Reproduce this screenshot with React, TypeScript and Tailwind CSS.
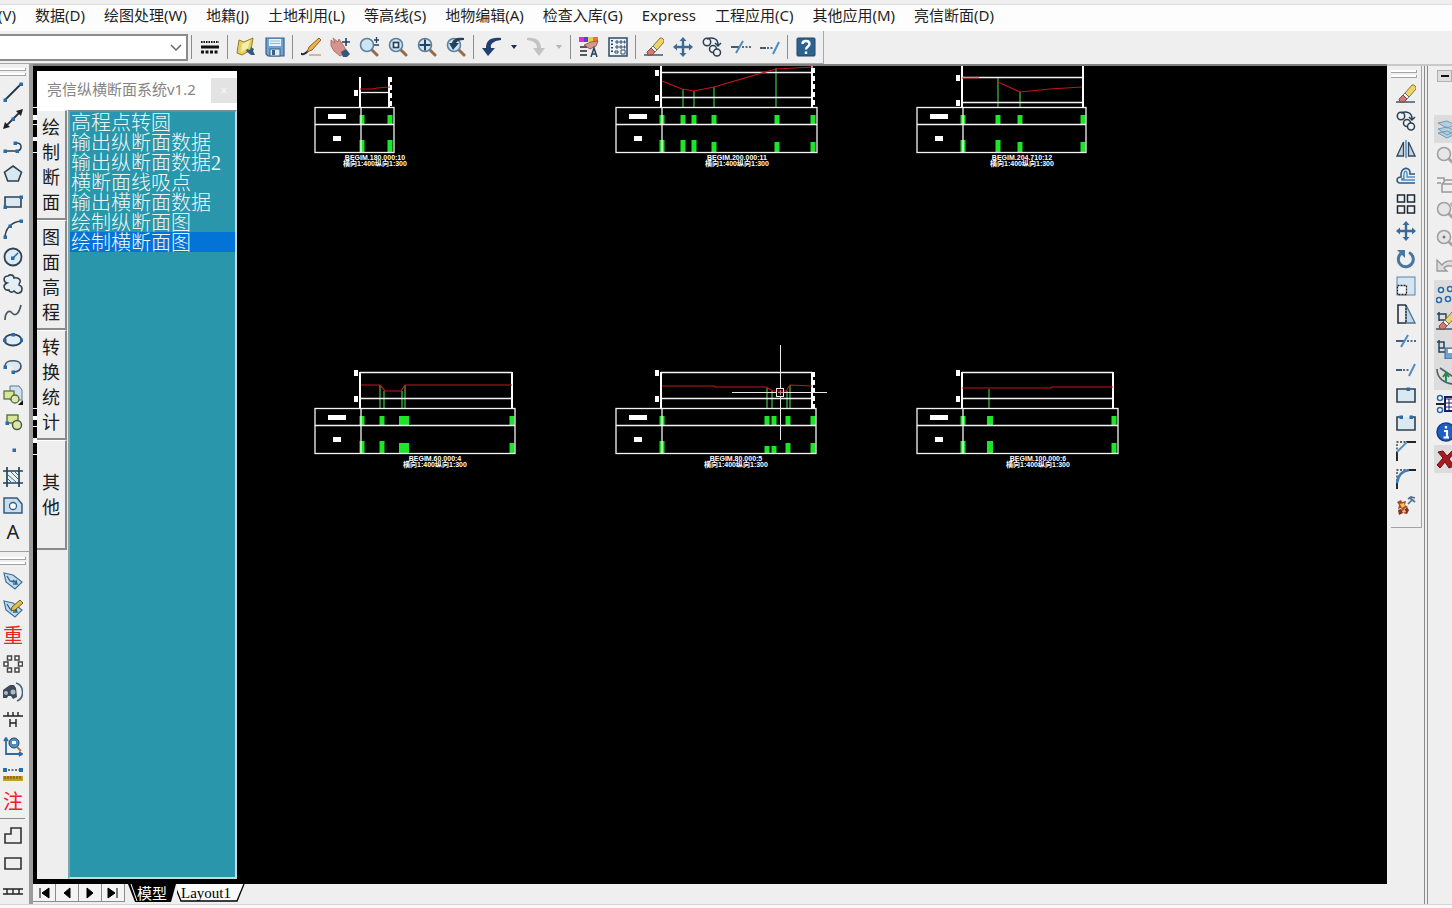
import { useState, type ReactNode } from "react";
import { clsx } from "clsx";

type IconDef = { label: string; art?: ReactNode; char?: string; charClass?: string };

const NAVY = "#24425c";
const BLUE = "#2b6ca6";

const Dot = ({ x, y }: { x: number; y: number }) => (
  <rect x={x - 1.5} y={y - 1.5} width="3.500" height="3.500" fill={BLUE} />
);

const Lens = ({ children, muted }: { children?: ReactNode; muted?: boolean }) => (
  <>
    <path d="M13 13l5 5" stroke={muted ? "#a5a5a5" : "#9a6a45"} strokeWidth="3" strokeLinecap="round" />
    <circle cx="8" cy="8" r="6.500" fill={muted ? "#e6e6e6" : "#cfe4f2"} stroke={muted ? "#a0a0a0" : "#5d7f9e"} strokeWidth="1.600" />
    {children}
  </>
);

const Eraser = () => (
  <>
    <path d="M0 18h19" stroke={NAVY} strokeWidth="1.300" />
    <path d="M9 9l7-8h2l2 2v2l-7 8z" fill="#ecd566" stroke="#7d6a2c" strokeWidth=".9" />
    <path d="M9 9l4 4-2 2-4-4z" fill="#eef2f6" stroke="#4f5f70" strokeWidth=".8" />
    <path d="M7 11l4 4-3 3H4l-1-3z" fill="#d07c70" stroke="#7d3f37" strokeWidth=".9" />
  </>
);

const MoveArrows = () => (
  <path d="M10 0l3.500 4H11.200v4.800H16V6.500l4 3.500-4 3.500v-2.300h-4.800V16h2.300L10 20l-3.500-4h2.300v-4.800H4v2.300L0 10l4-3.500v2.300h4.800V4H6.500z" fill="#3c6b98" />
);

const CopyRings = () => (
  <g fill="#eef2f5" stroke="#2d3d4a" strokeWidth="1.500">
    <circle cx="5" cy="5" r="3.700" />
    <path d="M5 2c5-2 11-1 11 6M13 6l3 3 3-3" fill="none" stroke={NAVY} />
    <circle cx="11" cy="12" r="3.500" />
    <circle cx="15" cy="15.500" r="3.500" />
  </g>
);

const Trim = () => (
  <>
    <path d="M0 10h8" stroke={NAVY} strokeWidth="1.700" />
    <path d="M11 10h9" stroke={NAVY} strokeWidth="1.700" strokeDasharray="2 1.500" />
    <path d="M5 16l7-12" stroke="#4d8cc2" strokeWidth="2" />
  </>
);

const Extend = () => (
  <>
    <path d="M0 11h6" stroke={NAVY} strokeWidth="1.700" />
    <path d="M7 11h7" stroke={NAVY} strokeWidth="1.700" strokeDasharray="2 1.500" />
    <path d="M13 17l6-12" stroke="#4d8cc2" strokeWidth="2" />
  </>
);

const Tag = () => (
  <>
    <path d="M1 2l9 2 9 7-7 7-9-7z" fill="#c3dcec" stroke="#3e6f96" strokeWidth="1.200" />
    <path d="M4 5l3 5 4 1M10 9l4 4M13 9l1 4-4 0" fill="none" stroke="#27628f" strokeWidth="1.300" />
  </>
);

const fileTools: IconDef[] = [
  {
    label: "打开图层",
    art: (
      <>
        <path d="M3 3l5 2 9-4-2 12-9 5-5-2z" fill="#e5d160" stroke="#927b27" />
        <path d="M6 7l8-4-2 8-7 4z" fill="#f5eda8" />
        <path d="M19 18h-4l-5-4 1-2 3 1 1-3 3 2-1 2z" fill="#31597e" />
      </>
    ),
  },
  {
    label: "保存",
    art: (
      <>
        <path d="M1 1h18v18H3l-2-2z" fill="#6fa4d2" stroke="#35618d" strokeWidth="1.200" />
        <rect x="4" y="2" width="12" height="7" fill="#e9f2f9" />
        <path d="M5 4h10M5 6.500h10" stroke="#9cb6cc" />
        <rect x="5" y="12" width="10" height="7" fill="#e1e8ee" stroke="#35618d" />
        <rect x="7" y="13" width="3" height="5" fill="#35618d" />
      </>
    ),
  },
];

const viewTools: IconDef[] = [
  {
    label: "画笔",
    art: (
      <>
        <path d="M0 16c1 3 5 0 7-2" stroke="#222" strokeWidth="2" fill="none" />
        <path d="M8 18h12" stroke="#d79a85" strokeWidth="1.500" />
        <path d="M6 15l2-5L18 1l2 2-9 10z" fill="#e7b54c" stroke="#8c5e25" />
      </>
    ),
  },
  {
    label: "平移",
    art: (
      <>
        <path d="M1 3l4 3-2-5 5 4 1-3 6 9 1 5-6 3-6-5-3-5z" fill="#d5948d" stroke="#a8625c" strokeWidth=".8" />
        <path d="M16 1v8M12 5h8" stroke={NAVY} strokeWidth="1.600" />
        <path d="M11 15l5-3 4 5-3 3h-4z" fill="#34577d" />
      </>
    ),
  },
  { label: "实时缩放", art: <Lens><path d="M15 3h5M17.500 0v6M15 8h5" stroke={NAVY} strokeWidth="1.300" /></Lens> },
  { label: "窗口缩放", art: <Lens><rect x="5.500" y="5.500" width="5" height="5" fill="#fff" stroke={NAVY} strokeWidth="1.700" /></Lens> },
  { label: "范围缩放", art: <Lens><path d="M8 2.500v11M2.500 8h11" stroke={NAVY} strokeWidth="2" /></Lens> },
  { label: "上一视图", art: <Lens><path d="M18 1C11 0 7 2 6 6H3l4 7 6-7h-3c1-2 4-3 8-3z" fill={NAVY} /></Lens> },
];

const stylesTools: IconDef[] = [
  {
    label: "特性匹配",
    art: (
      <>
        <path d="M0 0h5v5H0z" fill="#d830c8" />
        <path d="M5 0h4v5H5z" fill="#4747e0" />
        <path d="M9 0h5v5H9z" fill="#e3ce3c" />
        <path d="M14 0h5v5h-5z" fill="#e5753c" />
        <path d="M5 8l7-3 7-1-2 5-6 3z" fill="#d69b8c" stroke="#935c50" />
        <path d="M1 10h7M1 14h7M1 18h7" stroke="#585858" strokeWidth="1.800" />
        <path d="M12 20l3-9 3 9M13 17h4" fill="none" stroke={NAVY} strokeWidth="1.500" />
      </>
    ),
  },
  {
    label: "计算器",
    art: (
      <>
        <rect x="1" y="1" width="18" height="18" fill="#eef3f8" stroke="#2d4a67" strokeWidth="1.500" />
        <path d="M4 3v14" stroke={NAVY} strokeWidth="2" strokeDasharray="1.500 2" />
        <g fill="#fff" stroke="#2d4a67">
          <path d="M8 4h2v2H8zM12 4h2v2h-2zM16 4h1v2h-1zM8 9h2v2H8zM12 9h2v2h-2zM16 9h1v2h-1zM7 14h3v2H7zM13 13h4v4h-4z" />
        </g>
      </>
    ),
  },
];

const editTools: IconDef[] = [
  { label: "删除", art: <Eraser /> },
  { label: "移动", art: <MoveArrows /> },
  { label: "复制", art: <CopyRings /> },
  { label: "修剪", art: <Trim /> },
  { label: "延伸", art: <Extend /> },
];

const drawTools: IconDef[] = [
  { label: "直线", art: <><path d="M2 18L18 2" stroke="#263440" strokeWidth="1.800" /><Dot x={2} y={18} /><Dot x={18} y={2} /></> },
  {
    label: "构造线",
    art: (
      <>
        <path d="M2 18L18 2" stroke="#263440" strokeWidth="1.800" />
        <path d="M0 20l2-7 5 5zM20 0l-7 2 5 5z" fill="#222" />
        <Dot x={10} y={10} />
      </>
    ),
  },
  { label: "多段线", art: <><path d="M2 14h12c6-1 5-9-1-8" fill="none" stroke={NAVY} strokeWidth="1.500" /><Dot x={2} y={14} /><Dot x={14} y={14} /><Dot x={12} y={6} /></> },
  { label: "正多边形", art: <path d="M10 2l8.500 6.200L15.300 17H4.700L1.500 8.200z" fill="#d7e8f3" stroke="#2f4250" strokeWidth="1.600" /> },
  { label: "矩形", art: <><path d="M2 5h16v10H2z" fill="#dbe9f3" stroke="#2f4250" strokeWidth="1.600" /><Dot x={18} y={5} /><Dot x={2} y={15} /></> },
  { label: "圆弧", art: <><path d="M2 19C2 10 8 3 18 2" fill="none" stroke="#2f4250" strokeWidth="1.500" /><Dot x={2} y={18} /><Dot x={7} y={7} /><Dot x={18} y={2} /></> },
  { label: "圆", art: <><circle cx="10" cy="10" r="8.500" fill="#dcebf5" stroke="#2f4250" strokeWidth="1.800" /><path d="M10 11l5-5" stroke={BLUE} strokeWidth="1.500" /><Dot x={9.5} y={11} /></> },
  { label: "修订云线", art: <path d="M4 9C0 8 0 2 5 2c2-2 6-1 6 2 3-1 7 1 6 4-1 2-1 2-1 3 4 1 4 7 0 8-3 1-4-1-5-2-2 2-5 1-5-1-5 1-7-5-2-7z" fill="#e3eef5" stroke="#34444f" strokeWidth="1.600" /> },
  { label: "样条曲线", art: <path d="M2 18c0-7 4-11 7-7 4 4 7 0 9-8" fill="none" stroke="#4b5660" strokeWidth="1.700" /> },
  { label: "椭圆", art: <><ellipse cx="10" cy="10" rx="8.500" ry="5.500" fill="#e1eef6" stroke="#2f4250" strokeWidth="1.800" /><Dot x={1.5} y={10} /><Dot x={18.5} y={10} /><Dot x={10} y={4.5} /></> },
  { label: "椭圆弧", art: <><path d="M2 9C2 2 18 2 18 9c0 4-3 6-8 6V9z" fill="#dce9f2" /><path d="M2 9C2 2 18 2 18 9c0 4-3 6-8 6" fill="none" stroke="#44586a" strokeWidth="1.700" /><Dot x={2} y={10} /><Dot x={10} y={15} /></> },
  {
    label: "插入块",
    art: (
      <>
        <path d="M7 1h9l3 4v10H7z" fill="#cfe1ee" stroke="#587b97" />
        <rect x="1" y="6" width="10" height="8" fill="#d9e69a" stroke="#4c6a3a" strokeWidth="1.200" />
        <circle cx="12" cy="14" r="4" fill="#dbe6b3" stroke="#57693b" strokeWidth="1.300" />
        <path d="M20 15v5h-5z" fill="#111" />
      </>
    ),
  },
  {
    label: "创建块",
    art: (
      <>
        <rect x="4" y="3" width="11" height="8" fill="#d9e69a" stroke="#4c6a3a" strokeWidth="1.300" />
        <circle cx="14" cy="13" r="4.500" fill="#dbe6b3" stroke="#4c5d36" strokeWidth="1.500" />
        <Dot x={4} y={11} />
      </>
    ),
  },
  { label: "点", art: <Dot x={11} y={10} /> },
  { label: "图案填充", art: <><path d="M4 0v20M16 0v20M0 4h20M0 16h20" stroke={NAVY} strokeWidth="1.700" /><path d="M5 8l8 7M5 12l3 3M8 5l8 8M12 5l4 4" stroke={BLUE} /></> },
  { label: "面域", art: <><path d="M1 3h13l5 6v9H1z" fill="#c8def0" stroke="#355b7c" strokeWidth="1.500" /><circle cx="10" cy="11" r="3.500" fill="#fff" stroke="#355b7c" strokeWidth="1.300" /></> },
  { label: "多行文字", char: "A", charClass: "text-[#222222]" },
];

const annoTools: IconDef[] = [
  { label: "标签", art: <Tag /> },
  { label: "编辑标签", art: <><Tag /><path d="M8 12l1-4 8-7 3 3-8 7z" fill="#e2bd4e" stroke="#6d5524" /></> },
  { label: "重生成", char: "重", charClass: "text-[#e8231e]" },
  { label: "节点", art: <path d="M4.500 2h4v4h-4zM12 2h4v4h-4zM1 8h4v4H1zM15.500 8h4v4h-4zM4.500 14h4v4h-4zM12 14h4v4h-4z" fill="#fff" stroke="#444" strokeWidth="1.500" /> },
  {
    label: "查找",
    art: (
      <>
        <path d="M0 8l4-3 3-2h4l2 3 1 9-4 2-2-3H5l-1 2H0z" fill="#3e4a57" />
        <circle cx="3" cy="11" r="2" fill="#a9bccb" />
        <circle cx="10" cy="10" r="2.500" fill="#a9bccb" />
        <path d="M13 1c8 2 9 15 1 18" stroke="#4a6680" strokeWidth="1.700" fill="none" />
      </>
    ),
  },
  { label: "间距", art: <path d="M0 7h20M5 3v4M10 3v4M15 3v4M7 10v8M13 10v8M7 14h6" stroke="#222" strokeWidth="1.400" fill="none" /> },
  {
    label: "坐标查询",
    art: (
      <>
        <path d="M3 2v15h15M1 4l2-3 2 3M16 15l3 2-3 2" fill="none" stroke={BLUE} strokeWidth="1.800" />
        <circle cx="11" cy="6" r="5" fill="#4f8cc2" stroke={NAVY} />
        <rect x="9" y="4" width="4" height="3" fill="#fff" />
        <path d="M14 10l4 4" stroke="#a8764c" strokeWidth="2" />
      </>
    ),
  },
  {
    label: "量距",
    art: (
      <>
        <path d="M5 5h11" stroke="#445" strokeWidth="1.500" strokeDasharray="2 1.500" />
        <rect x="0" y="3" width="4" height="4" fill={BLUE} />
        <rect x="16" y="3" width="4" height="4" fill={BLUE} />
        <rect x="0" y="11" width="20" height="5" fill="#c69d27" />
        <path d="M2 11v3M5 11v3M8 11v3M11 11v3M14 11v3M17 11v3" stroke="#5e470b" />
      </>
    ),
  },
  { label: "注记", char: "注", charClass: "text-[#e8231e]" },
];

const shapeTools: IconDef[] = [
  { label: "房屋", art: <path d="M2 18V9h6V3h10v15z" fill="none" stroke="#333" strokeWidth="1.600" /> },
  { label: "方框", art: <path d="M2 6h16v11H2z" fill="none" stroke="#333" strokeWidth="1.600" /> },
  { label: "围栏", art: <path d="M0 10h20M0 15h20M4 10v5M10 10v5M16 10v5" fill="none" stroke="#222" strokeWidth="1.400" /> },
];

const modifyTools: IconDef[] = [
  { label: "删除", art: <Eraser /> },
  { label: "复制", art: <CopyRings /> },
  { label: "镜像", art: <><path d="M7.500 3v14H1zM12.500 3v14H19z" fill="#c6d4df" stroke="#31485c" strokeWidth="1.300" /><path d="M10 1v18" stroke="#4f8cc2" strokeWidth="1.500" /></> },
  {
    label: "偏移",
    art: (
      <>
        <path d="M19 17H4c-4 0-4-6 1-6C4 0 15 0 14 8h5" fill="none" stroke="#2c5c88" strokeWidth="1.700" />
        <path d="M19 14H6c-1-1 0-2 2-1C7 3 12 3 11 11h8" fill="none" stroke="#4f90c8" strokeWidth="1.500" />
      </>
    ),
  },
  { label: "阵列", art: <path d="M1.500 1h7v7h-7zM11.500 1h7v7h-7zM1.500 12h7v7h-7zM11.500 12h7v7h-7z" fill="#edf0f3" stroke="#1f2a33" strokeWidth="1.500" /> },
  { label: "移动", art: <MoveArrows /> },
  { label: "旋转", art: <><path d="M5 4.500A7.500 7.500 0 1 0 13 3.500" fill="none" stroke="#47769f" strokeWidth="3" /><path d="M1 1h8v8z" fill="#47769f" /></> },
  { label: "缩放", art: <><rect x="1" y="1" width="18" height="18" fill="#d4e5f2" stroke="#5a84a8" /><rect x="1.500" y="9.500" width="9" height="9" fill="#f3f6f8" stroke="#222" strokeWidth="1.300" strokeDasharray="2 1" /></> },
  { label: "拉伸", art: <><path d="M10 1l9 18h-9z" fill="#c3d8e8" stroke="#4d7596" strokeWidth="1.300" /><path d="M10 1H2v18h8" fill="none" stroke="#26333e" strokeWidth="1.600" /><path d="M10 1v18" stroke="#26333e" strokeWidth="1.300" strokeDasharray="2 1" /></> },
  { label: "修剪", art: <Trim /> },
  { label: "延伸", art: <Extend /> },
  { label: "打断于点", art: <><path d="M1 3h18v13H1z" fill="#dae8f2" stroke="#2f3f4c" strokeWidth="1.600" /><Dot x={12} y={3} /></> },
  { label: "打断", art: <><path d="M5 3H1v13h18V3h-4" fill="#dae8f2" stroke="#2f3f4c" strokeWidth="1.600" /><Dot x={5} y={3} /><Dot x={15} y={3} /></> },
  { label: "倒角", art: <><path d="M1 12V1h11" fill="none" stroke="#333" strokeDasharray="2 1.500" strokeWidth="1.300" /><path d="M1 20v-9M10 1h10" stroke="#222" strokeWidth="1.900" /><path d="M1 11L11 1" stroke="#4f90c8" strokeWidth="1.800" /></> },
  { label: "圆角", art: <><path d="M1 12V1h11" fill="none" stroke="#333" strokeDasharray="2 1.500" strokeWidth="1.300" /><path d="M1 20v-7M12 1h8" stroke="#222" strokeWidth="1.900" /><path d="M1 14C2 6 6 2 13 1" fill="none" stroke="#3d7db5" strokeWidth="2.500" /></> },
  {
    label: "分解",
    art: (
      <>
        <path d="M1 6l4-2 1 2 4-1-1 4 3 2-3 1-2 3-2-3-3 1 1-4z" fill="#a9482c" />
        <path d="M2 14l3-1 2 2 4-4 2 3-2 4-4-1-4 2z" fill="#8d2d22" />
        <path d="M4 8l4-1 1 3-3 2zM6 15l3-1 1 2-3 1z" fill="#f0cb52" />
        <path d="M12 8l4-4M14 2l5 4M12 3l3-2 4 1" fill="none" stroke="#557089" strokeWidth="1.700" />
      </>
    ),
  },
];

type DockIcon = IconDef & { raised?: boolean };

const dockTools: DockIcon[] = [
  { label: "图层", raised: true, art: <path d="M2 4l9-2 8 4-8 3zM2 10l9-2 8 4-8 4zM2 14l9-2 8 3-8 4z" fill="#b7cfdf" stroke="#6f9cba" /> },
  { label: "缩放", art: <Lens muted /> },
  { label: "三维盒", art: <path d="M1 4h7v2h9V2l3 2v8l-4 6H6v-8h11M6 10l3-3M1 9h4" fill="none" stroke="#999" strokeWidth="1.500" /> },
  { label: "动态缩放", art: <Lens muted><path d="M16 1v5M14 3h5" stroke="#999" /></Lens> },
  { label: "中心缩放", art: <Lens muted><circle cx="8" cy="8" r="1.500" fill="#777" /></Lens> },
  { label: "返回", art: <path d="M1 4v11h10l-3-3c3-3 7-3 12 0V6C14 4 9 5 6 9z" fill="#dcdcdc" stroke="#999" strokeWidth="1.300" /> },
  { label: "节点编辑", raised: true, art: <g fill="#e4f0f8" stroke={BLUE} strokeWidth="1.600"><circle cx="5" cy="6" r="2.500" /><circle cx="14" cy="5" r="2.500" /><circle cx="3" cy="16" r="2.500" /><circle cx="12" cy="15" r="2.500" /></g> },
  { label: "删除节点", raised: true, art: <><path d="M3 1v9M1 3h9v6H3" fill="none" stroke={NAVY} strokeWidth="1.500" /><Eraser /></> },
  { label: "保存节点", raised: true, art: <><path d="M3 1v12h6M1 3h7v6H3" fill="none" stroke={NAVY} strokeWidth="1.500" /><path d="M9 9h11v11H9z" fill="#6fa4d2" stroke="#35618d" /><path d="M12 10h7v4h-7z" fill="#fff" /></> },
  { label: "曲线", raised: true, art: <><path d="M1 2c0 9 7 15 18 15M4 1l15 10" fill="none" stroke="#4b5f6c" strokeWidth="1.600" /><path d="M10 15V7M7 10l3-4 3 4" fill="none" stroke="#228b52" strokeWidth="2" /></> },
  { label: "属性表", art: <><circle cx="4" cy="4" r="2.500" fill="#fff" stroke={BLUE} strokeWidth="1.500" /><circle cx="4" cy="16" r="2.500" fill="#fff" stroke={BLUE} strokeWidth="1.500" /><path d="M0 10h8" stroke="#222" strokeWidth="2" /><path d="M9 3h11v14H9z" fill="#fff" stroke="#1a1d60" strokeWidth="2" /><path d="M9 5h11M9 9h11M9 13h11M13 5v12M17 5v12" stroke="#1a1d60" /></> },
  { label: "信息", art: <><circle cx="10" cy="10" r="9" fill="#1f5fc4" stroke="#143f86" strokeWidth="1.500" /><path d="M10 4v2.500M8 9h3v6M7.500 15.500h5.500" fill="none" stroke="#fff" strokeWidth="2.200" /></> },
  { label: "关闭", raised: true, art: <path d="M2 3l5-1 4 5 6-6 2 2-6 7 5 7-5 2-4-6-5 6-3-3 6-7z" fill="#a81a1d" stroke="#6b1113" /> },
];

const menus = [
  "(V)",
  "数据(D)",
  "绘图处理(W)",
  "地籍(J)",
  "土地利用(L)",
  "等高线(S)",
  "地物编辑(A)",
  "检查入库(G)",
  "Express",
  "工程应用(C)",
  "其他应用(M)",
  "亮信断面(D)",
];

const paletteTabs = ["绘制断面", "图面高程", "转换统计", "其他"];

const commands = [
  "高程点转圆",
  "输出纵断面数据",
  "输出纵断面数据2",
  "横断面线吸点",
  "输出横断面数据",
  "绘制纵断面图",
  "绘制横断面图",
];

type Mark = { x: number; w?: number; drop: number };

type Section = {
  x: number;
  right: number;
  y: number;
  top: number;
  axis: [number, number];
  dashed?: boolean;
  levels: number[];
  profile: string;
  stems: [number, number][];
  marks: Mark[];
  caption: [number, string];
};

const sections: Section[] = [
  {
    x: 315, right: 394, y: 107, top: 77, axis: [360, 389], dashed: true, levels: [92],
    profile: "M360 89h12l5-1 13-1",
    stems: [],
    marks: [{ x: 362, drop: 33 }, { x: 390, drop: 33 }],
    caption: [375, "BEGIM.180.000:10"],
  },
  {
    x: 616, right: 817, y: 107, top: 60, axis: [661, 812], dashed: true, levels: [72, 97],
    profile: "M662 81l20 8 12 2 20-4 62-18 19-1 18-1",
    stems: [[683, 89], [694, 91], [714, 87], [776, 68]],
    marks: [{ x: 662, drop: 33 }, { x: 683, drop: 33 }, { x: 694, drop: 33 }, { x: 714, drop: 35 }, { x: 777, drop: 35 }, { x: 813, drop: 35 }],
    caption: [737, "BEGIM.200.000:11"],
  },
  {
    x: 917, right: 1086, y: 107, top: 60, axis: [962, 1083], levels: [77, 102],
    profile: "M962 78h17M998 82l22 10 30-3 32-2",
    stems: [[998, 77], [1020, 92]],
    marks: [{ x: 963, drop: 33 }, { x: 998, drop: 33 }, { x: 1020, drop: 35 }, { x: 1083, drop: 35 }],
    caption: [1022, "BEGIM.204.710:12"],
  },
  {
    x: 315, right: 515, y: 408, top: 372, axis: [360, 512], levels: [372, 398],
    profile: "M361 385h19l5 6h16l4-6h107",
    stems: [[380, 385], [384, 391], [402, 391], [405, 385]],
    marks: [{ x: 362, drop: 33 }, { x: 382, drop: 33 }, { x: 404, w: 10, drop: 35 }, { x: 512, drop: 35 }],
    caption: [435, "BEGIM.60.000:4"],
  },
  {
    x: 616, right: 816, y: 408, top: 372, axis: [661, 812], dashed: true, levels: [372, 398],
    profile: "M662 386h52l1 1h51l7 4h13l4-6 22 1",
    stems: [[767, 388], [772, 391], [787, 391], [790, 385]],
    marks: [{ x: 662, drop: 33 }, { x: 767, drop: 38 }, { x: 774, drop: 38 }, { x: 788, drop: 35 }, { x: 813, drop: 35 }],
    caption: [736, "BEGIM.80.000:5"],
  },
  {
    x: 917, right: 1118, y: 408, top: 372, axis: [962, 1113], levels: [372, 398],
    profile: "M962 388h89l1-1h61",
    stems: [[989, 389]],
    marks: [{ x: 963, drop: 33 }, { x: 990, w: 6, drop: 33 }, { x: 1114, drop: 35 }],
    caption: [1038, "BEGIM.100.000:6"],
  },
];

function CrossSection({ s }: { s: Section }) {
  const [left, right] = s.axis;
  return (
    <g>
      {s.marks.map((m) => {
        const w = m.w ?? 5;
        return (
          <g key={m.x} fill="#1fe52a">
            <rect x={m.x - w / 2} y={s.y + 8} width={w} height="10" />
            <rect x={m.x - w / 2} y={s.y + m.drop} width={w} height={45 - m.drop} />
          </g>
        );
      })}
      <g stroke="#3cc548" strokeWidth="1.200">
        {s.stems.map(([x, y]) => (
          <path key={x} d={`M${x} ${y}V${s.y}`} />
        ))}
      </g>
      <g fill="none" stroke="#f4f4f4" strokeWidth="1.300">
        <rect x={s.x} y={s.y + 0.5} width={s.right - s.x} height="45" />
        <path d={`M${s.x} ${s.y + 17.5}H${s.right}M${left + 1} ${s.y}v45`} />
        {s.levels.map((y) => (
          <path key={y} d={`M${left} ${y + 0.5}H${right}`} />
        ))}
      </g>
      <g stroke="#ffffff" strokeWidth="2">
        <path d={`M${left} ${s.top}V${s.y}M${right} ${s.top}V${s.y}`} />
        {s.dashed && <path d={`M${right + 2} ${s.top}V${s.y}`} strokeDasharray="5 3" />}
      </g>
      <g fill="#ffffff">
        {s.levels.map((y) => (
          <rect key={y} x={left - 6} y={y - 2} width="4" height="6" />
        ))}
        <rect x={s.x + 13} y={s.y + 7} width="18" height="5" />
        <rect x={s.x + 18} y={s.y + 29} width="8" height="5" />
      </g>
      <path d={s.profile} fill="none" stroke="#c4161c" strokeWidth="1.200" />
      <g fill="#ffffff" fontSize="7" fontWeight="700" textAnchor="middle">
        <text x={s.caption[0]} y={s.y + 53}>{s.caption[1]}</text>
        <text x={s.caption[0]} y={s.y + 59}>横向1:400纵向1:300</text>
      </g>
    </g>
  );
}

function ToolButton({ icon, className }: { icon: IconDef; className?: string }) {
  return (
    <button aria-label={icon.label} className={clsx("flex shrink-0 items-center justify-center", className)}>
      {icon.char ? (
        <span className={clsx("text-xl leading-6", icon.charClass)}>{icon.char}</span>
      ) : (
        <svg viewBox="0 0 20 20" className="h-5 w-5 shrink-0" fill="none">
          {icon.art}
        </svg>
      )}
    </button>
  );
}

function ToolRow({ icons }: { icons: IconDef[] }) {
  return icons.map((icon) => <ToolButton key={icon.label} icon={icon} className="h-7 w-[29px]" />);
}

function ToolColumn({ icons, className }: { icons: IconDef[]; className: string }) {
  return (
    <div className={clsx("flex flex-col", className)}>
      {icons.map((icon) => (
        <ToolButton key={icon.label} icon={icon} className="w-[26px] flex-1" />
      ))}
    </div>
  );
}

const Divider = () => <span className="mx-[3px] h-6 w-px bg-[#8c8c8c]" />;

const Grip = () => (
  <div className="flex h-2 w-[26px] flex-col justify-between">
    <span className="h-[3px] border-r border-b border-[#a3a3a3] bg-white" />
    <span className="h-[3px] border-r border-b border-[#a3a3a3] bg-white" />
  </div>
);

function DropArrow({ label, muted }: { label: string; muted?: boolean }) {
  return (
    <button aria-label={label} className="flex h-7 w-4 items-center justify-center">
      <svg viewBox="0 0 6 4" className={clsx("h-1 w-1.5", muted ? "fill-[#b5b5b5]" : "fill-[#1c2c50]")}>
        <path d="M0 0h6L3 4z" />
      </svg>
    </button>
  );
}

function Palette() {
  const [tab, setTab] = useState(0);
  const [selected, setSelected] = useState(6);

  return (
    <section className="absolute top-[5px] bottom-[5px] left-1 flex w-[200px] flex-col bg-[#eeeeee]">
      <header className="flex h-[39px] shrink-0 items-center bg-white pl-2.5">
        <h2 className="flex-1 pb-1 text-[15px] leading-5 whitespace-nowrap text-[#858585]">亮信纵横断面系统v1.2</h2>
        <button aria-label="关闭" className="h-[25px] w-[26px] bg-[#e3e3e3] text-xs text-[#f8f8f8]">
          ×
        </button>
      </header>
      <div className="flex min-h-0 flex-1">
        <div className="flex w-[31px] shrink-0 flex-col" role="tablist">
          {paletteTabs.map((name, i) => (
            <button
              key={name}
              role="tab"
              aria-selected={tab === i}
              onClick={() => setTab(i)}
              className="flex h-[110px] w-[30px] flex-col items-center justify-center border-t border-r-2 border-b-2 border-t-white border-r-[#8a8a8a] border-b-[#8a8a8a] text-lg leading-[25px] text-[#1c1c1c]"
            >
              {[...name].map((char) => (
                <span key={char}>{char}</span>
              ))}
            </button>
          ))}
        </div>
        <ul className="min-w-0 flex-1 border-2 border-[#c4dce0] border-t-[#6d8f96] border-l-[#7fa4ab] bg-[#2a96ab]">
          {commands.map((name, i) => (
            <li key={name}>
              <button
                onClick={() => setSelected(i)}
                className={clsx(
                  "block h-5 w-full pl-px text-left font-['Liberation_Serif','Noto_Sans_CJK_SC',serif] text-xl leading-[22px] font-light whitespace-nowrap text-[#eefafa]",
                  selected === i && "bg-[#0473d8]"
                )}
              >
                {name}
              </button>
            </li>
          ))}
        </ul>
      </div>
    </section>
  );
}

const navArrows = [
  { label: "第一个", d: "M3 1v10M12 1v10L5 6z" },
  { label: "上一个", d: "M10 1v10L4 6z" },
  { label: "下一个", d: "M4 1v10l6-5z" },
  { label: "最后一个", d: "M11 1v10M2 1v10l7-5z" },
];

function LayoutTabs() {
  return (
    <div className="flex h-5 shrink-0 items-start bg-[#efefef]">
      {navArrows.map((arrow) => (
        <button
          key={arrow.label}
          aria-label={arrow.label}
          className="flex h-[18px] w-[23px] items-center justify-center border-r border-b border-[#8c8c8c] bg-[#f4f4f4]"
        >
          <svg viewBox="0 0 14 12" className="h-3 w-3.5 fill-black stroke-black">
            <path d={arrow.d} strokeWidth="1" />
          </svg>
        </button>
      ))}
      <button className="relative ml-0.5 h-[18px] w-[50px] text-[15px] leading-4 text-white">
        <svg viewBox="0 0 50 18" className="absolute inset-0 h-full w-full">
          <path d="M1 0h48l-5 18H8z" fill="#000" />
          <path d="M4 0l6 17" stroke="#fff" />
        </svg>
        <span className="relative">模型</span>
      </button>
      <button className="relative h-[18px] w-[68px] pl-1 text-left font-['Liberation_Serif',serif] text-[15px] leading-4 text-black">
        <svg viewBox="0 0 68 18" className="absolute inset-0 h-full w-full">
          <path d="M-3 0L4 17h56L67 0" fill="#fafafa" stroke="#000" strokeWidth="1.300" />
        </svg>
        <span className="relative">Layout1</span>
      </button>
    </div>
  );
}

export default function App() {
  const [lineType, setLineType] = useState("");

  return (
    <div className="flex h-screen w-full flex-col overflow-hidden bg-[#efefef] font-['Noto_Sans','Noto_Sans_CJK_SC',sans-serif] text-[#1f1f1f]">
      <nav className="mt-1 flex h-[27px] shrink-0 items-start gap-[19px] border-t border-[#dddddd] bg-[#fdfdfd]">
        {menus.map((menu) => (
          <button key={menu} className="text-[15px] leading-5 whitespace-nowrap first:-ml-0.5">
            {menu}
          </button>
        ))}
      </nav>

      <div className="flex h-[33px] shrink-0">
        <div className="flex items-center border-r border-b border-[#a8a8a8] pr-[3px]">
          <div className="relative">
            <select
              aria-label="线型"
              value={lineType}
              onChange={(e) => setLineType(e.target.value)}
              className="block h-[27px] w-[188px] appearance-none border-2 border-l-0 border-[#8c8c8c] bg-white text-sm"
            >
              <option value=""></option>
            </select>
            <svg viewBox="0 0 12 8" className="pointer-events-none absolute top-2.5 right-1.5 h-2 w-3">
              <path d="M1 1l5 5 5-5" fill="none" stroke="#666" strokeWidth="1.500" />
            </svg>
          </div>
          <Divider />
          <ToolRow
            icons={[
              {
                label: "线宽",
                art: (
                  <>
                    <path d="M1 5h18" stroke="#111" strokeWidth="2" strokeDasharray="1.500 1" />
                    <path d="M1 10h18" stroke="#111" strokeWidth="3" />
                    <path d="M1 15h18" stroke="#111" strokeWidth="3" strokeDasharray="3 1.500" />
                  </>
                ),
              },
            ]}
          />
          <Divider />
          <ToolRow icons={fileTools} />
          <Divider />
          <ToolRow icons={viewTools} />
          <Divider />
          <ToolButton
            className="h-7 w-[29px]"
            icon={{ label: "放弃", art: <path d="M19 1C8 0 4 4 4 11H0l6 8 7-8H9c-1-4 2-7 10-8z" fill="#22406f" /> }}
          />
          <DropArrow label="放弃列表" />
          <ToolButton
            className="h-7 w-[29px]"
            icon={{ label: "重做", art: <path d="M0 1c9-1 14 3 14 10h4l-6 8-6-8h4c0-5-3-7-10-8z" fill="#c3c3c3" /> }}
          />
          <DropArrow label="重做列表" muted />
          <Divider />
          <ToolRow icons={stylesTools} />
          <Divider />
          <ToolRow icons={editTools} />
          <Divider />
          <ToolButton
            className="h-7 w-[29px]"
            icon={{
              label: "帮助",
              art: (
                <>
                  <rect x="1" y="1" width="18" height="18" rx="1" fill="#2d628f" stroke="#1d4569" />
                  <path d="M6.500 7c0-4 7-4 7 0 0 2.500-3.500 2.500-3.500 5.500M10 14.500v2.500" fill="none" stroke="#fff" strokeWidth="2.400" />
                </>
              ),
            }}
          />
        </div>
      </div>

      <main className="flex min-h-0 flex-1">
        <aside className="flex w-[33px] shrink-0 flex-col overflow-hidden border-r-4 border-[#9b9b9b] pt-1">
          <Grip />
          <ToolColumn icons={drawTools} className="mt-0.5 h-[468px] shrink-0" />
          <span className="my-[5px] h-px shrink-0 bg-[#a0a0a0]" />
          <Grip />
          <ToolColumn icons={annoTools} className="mt-0.5 h-[249px] shrink-0" />
          <span className="my-0.5 h-px w-[25px] shrink-0 bg-[#8c8c8c]" />
          <ToolColumn icons={shapeTools} className="h-[82px] shrink-0" />
        </aside>

        <div className="flex min-w-0 flex-1 flex-col">
          <div className="relative min-h-0 flex-1 overflow-hidden border-t-2 border-[#808080] bg-black">
            <svg className="absolute inset-0 h-full w-full font-['Liberation_Sans','Noto_Sans_CJK_SC',sans-serif]">
              <g transform="translate(-33 -66)">
                <path d="M33 107.500h4M33 124.500h4M33 152.500h4M33 408.500h4M33 426.500h4M33 454.500h4" stroke="#fff" />
                <path d="M33 115h4v5h-4zM33 137h4v4h-4zM33 416h4v4h-4zM33 438h4v5h-4z" fill="#fff" />
                {sections.map((s) => (
                  <CrossSection key={s.caption[1]} s={s} />
                ))}
                <g stroke="#e8e8e8" fill="none">
                  <path d="M780.500 345v43M780.500 396v44M732 392.500h44M784 392.500h43" />
                  <rect x="776.500" y="388.500" width="7" height="8" />
                  <path d="M778 392.500h5M780.500 390v5" stroke="#d08080" />
                </g>
              </g>
            </svg>
            <Palette />
          </div>
          <LayoutTabs />
        </div>

        <aside className="flex w-[65px] shrink-0 overflow-hidden border-t-2 border-[#c9c9c9] pl-1">
          <div className="flex h-[462px] w-[31px] shrink-0 flex-col border-r border-b border-[#a3a3a3] pt-1">
            <Grip />
            <ToolColumn icons={modifyTools} className="mt-0.5 ml-0.5 h-[440px] shrink-0" />
          </div>
          <span className="ml-0.5 w-1 shrink-0 border-x border-[#8a8a8a]" />
          <div className="flex min-w-0 flex-1 flex-col pt-1">
            <button aria-label="折叠" className="ml-[9px] flex h-3 w-[15px] shrink-0 items-center justify-center border border-[#b0b0b0] bg-[#dedede]">
              <span className="h-0.5 w-2 bg-[#111111]" />
            </button>
            <div className="mt-[33px] ml-[6px] flex h-[358px] w-6 shrink-0 flex-col">
              {dockTools.map((icon) => (
                <ToolButton key={icon.label} icon={icon} className={clsx("w-6 flex-1", icon.raised && "bg-[#dcdcdc]")} />
              ))}
            </div>
          </div>
        </aside>
      </main>
      <footer className="h-1 shrink-0 border-t border-[#d5d5d5] bg-[#fafafa]" />
    </div>
  );
}
